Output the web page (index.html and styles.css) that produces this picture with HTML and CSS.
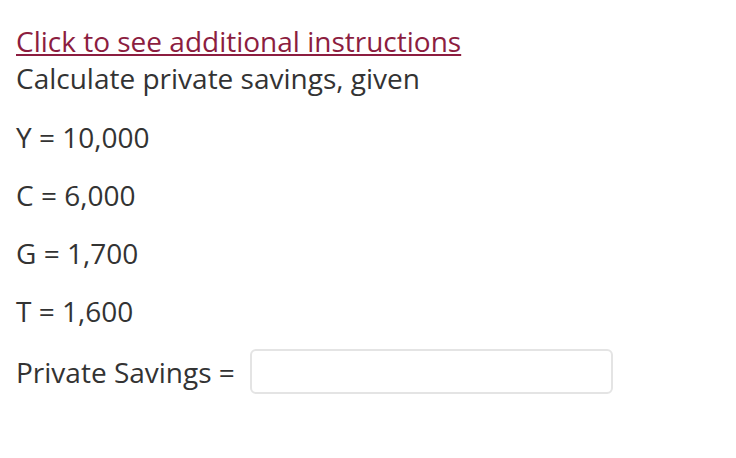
FILE: index.html
```html
<!DOCTYPE html>
<html>
<head>
<meta charset="utf-8">
<link rel="stylesheet" href="styles.css">
</head>
<body>
<div class="question">
  <a class="instructions" href="#">Click to see additional instructions</a>
  <div class="prompt">Calculate private savings, given</div>
  <p class="given first">Y = 10,000</p>
  <p class="given">C = 6,000</p>
  <p class="given">G = 1,700</p>
  <p class="given">T = 1,600</p>
  <div class="answer">
    <label class="answer-label" for="ps">Private Savings =</label>
    <input class="answer-input" id="ps" type="text">
  </div>
</div>
</body>
</html>
```

FILE: styles.css
```css
html, body {
  margin: 0;
  background: #ffffff;
}
body {
  font-family: "Open Sans", "Liberation Sans", sans-serif;
  color: #333333;
  font-size: 28px;
}
.question {
  padding: 22px 16px 0 16px;
}
.instructions {
  display: block;
  color: #8c1d40;
  text-decoration: underline;
  line-height: 38px;
  width: max-content;
}
.prompt {
  line-height: 36px;
}
.given {
  margin: 22px 0 0 0;
  line-height: 36px;
}
.given.first {
  margin-top: 23px;
}
.answer {
  display: flex;
  align-items: center;
  gap: 15px;
  margin-top: 20px;
}
.answer-input {
  width: 363px;
  height: 45px;
  box-sizing: border-box;
  border: 2px solid #e4e4e4;
  border-radius: 6px;
  font-size: 20px;
  padding: 0 8px;
  font-family: inherit;
  background: #ffffff;
}
```
